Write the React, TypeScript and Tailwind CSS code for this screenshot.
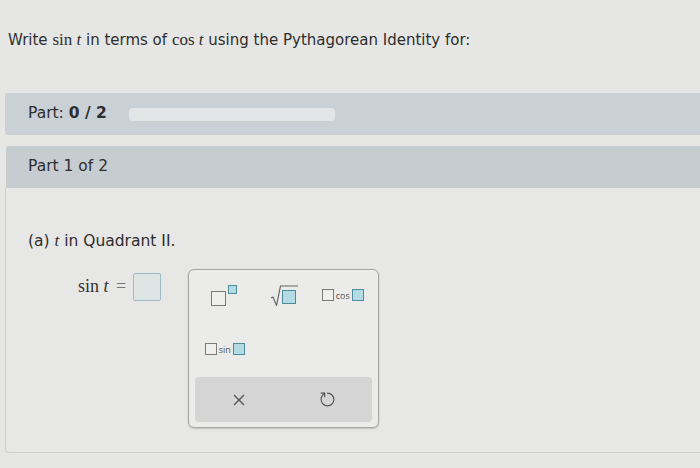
import React from "react";
import { RotateCcw } from "lucide-react";

const Sq = ({ s = 14, blue = false, className = "" }: { s?: number; blue?: boolean; className?: string }) => (
  <div
    className={
      "box-border shrink-0 " +
      (blue ? "bg-[#b4dbe4] border-[1.5px] border-[#4a8e9e] " : "bg-[#efefee] border-[1.5px] border-[#7a7a7a] ") +
      className
    }
    style={{ width: s, height: s }}
  />
);

const serif = { fontFamily: '"Liberation Serif", "Times New Roman", serif' };

export default function App() {
  return (
    <div className="w-[700px] h-[468px] overflow-hidden bg-[#e6e6e4] text-[#2e2e2e]" style={{ fontFamily: '"DejaVu Sans", Verdana, sans-serif' }}>
      <div className="pt-[30px] pl-[8px] h-[93px] text-[15px] leading-[20px]">
        Write <span className="text-[17px]" style={serif}>sin <i>t</i></span> in terms of{" "}
        <span className="text-[17px]" style={serif}>cos <i>t</i></span> using the Pythagorean Identity for:
      </div>
      <div className="ml-[5px] h-[42px] bg-[#c9d1d6] rounded-l-[3px] flex items-center pl-[23px] text-[15.5px]">
        <span>
          Part: <b>0 / 2</b>
        </span>
        <div className="ml-[22px] w-[206px] h-[13px] rounded-[4px] bg-[#e3e6e7]" />
      </div>
      <div className="mt-[11px] ml-[6px] h-[42px] bg-[#c6ccd0] rounded-tl-[3px] flex items-center pl-[22px] text-[15.5px]">
        Part 1 of 2
      </div>
      <div className="ml-[5px] h-[265px] border border-t-0 border-r-0 border-[#cfcfcc] rounded-bl-[4px] bg-[#e7e7e5] pl-[22px] pt-[43px]">
        <div className="text-[15.5px] leading-[20px]">
          (a) <i style={serif} className="text-[17px]">t</i> in Quadrant II.
        </div>
        <div className="flex mt-[18px]">
          <div className="flex items-start pl-[50px] pt-[4px]">
            <span className="text-[18px] leading-[27px] text-[#333]" style={serif}>
              sin <i>t</i> <span className="ml-[3px] text-[#777]">=</span>
            </span>
            <div className="ml-[7px] w-[28px] h-[28px] box-border border-[1.5px] border-[#9cbcc6] bg-[#dfe4e5] rounded-[2px]" />
          </div>
          <div className="ml-[27px] w-[191px] h-[159px] box-border border border-[#a5a5a3] rounded-[6px] bg-[#ebebea] shadow-[0_1px_2px_rgba(0,0,0,0.15)] pt-[13px] px-[6px]">
            <div className="grid grid-cols-3 h-[24px] items-center">
              <div className="flex justify-center">
                <div className="flex items-start w-[27px] h-[21px]">
                  <Sq s={15} className="mt-[6px]" />
                  <Sq s={9} blue className="ml-[2px]" />
                </div>
              </div>
              <div className="flex justify-center">
                <div className="relative w-[28px] h-[21px]">
                  <svg width="28" height="21" viewBox="0 0 28 21" className="absolute left-0 top-0">
                    <path d="M1 13 L3 12 L6.5 20.5 L10.5 1 L28 1" fill="none" stroke="#666" strokeWidth="1.2" />
                  </svg>
                  <Sq s={14} blue className="absolute left-[12px] top-[5px]" />
                </div>
              </div>
              <div className="flex justify-center items-center gap-[1px]">
                <Sq s={12} />
                <span className="text-[9px] leading-none text-[#555] px-[1px]" style={{ fontFamily: '"Open Sans", sans-serif' }}>cos</span>
                <Sq s={12} blue />
              </div>
            </div>
            <div className="grid grid-cols-3 h-[24px] mt-[30px] items-center">
              <div className="flex justify-center items-center gap-[1px]">
                <Sq s={12} />
                <span className="text-[9px] leading-none text-[#555] px-[1px]" style={{ fontFamily: '"Open Sans", sans-serif' }}>sin</span>
                <Sq s={12} blue />
              </div>
            </div>
            <div className="mt-[16px] h-[45px] bg-[#d4d5d4] rounded-[4px] grid grid-cols-2 items-center">
              <div className="flex justify-center">
                <svg width="14" height="14" viewBox="0 0 14 14">
                  <path d="M2 2 L12 12 M12 2 L2 12" stroke="#555" strokeWidth="1.4" />
                </svg>
              </div>
              <div className="flex justify-center">
                <RotateCcw size={17} strokeWidth={1.6} color="#555" className="scale-x-[-1] rotate-[-90deg]" />
              </div>
            </div>
          </div>
        </div>
      </div>
    </div>
  );
}
